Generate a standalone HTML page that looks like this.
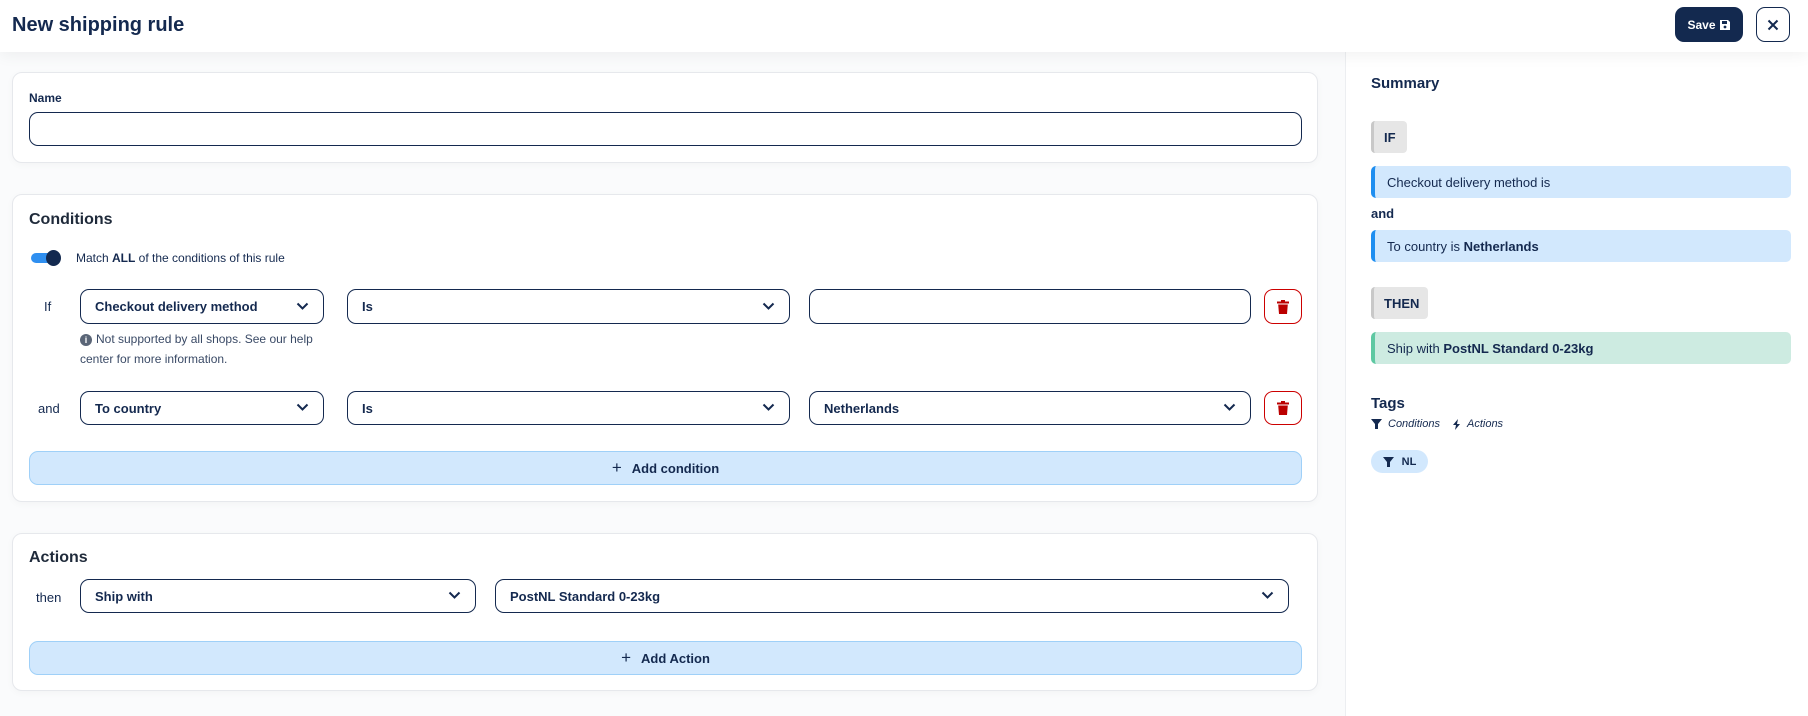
<!DOCTYPE html>
<html><head><meta charset="utf-8"><style>
*{box-sizing:border-box;margin:0;padding:0}
body{width:1808px;height:716px;overflow:hidden;background:#fafbfc;font-family:"Liberation Sans",sans-serif;color:#14294f;position:relative}
.a{position:absolute}
.hdr{left:0;top:0;width:1808px;height:52px;background:#fff;box-shadow:0 4px 14px rgba(0,0,0,0.05);z-index:2}
.card{position:absolute;background:#fff;border:1px solid #e6e8ec;border-radius:10px;box-shadow:0 2px 8px rgba(0,0,0,0.03)}
.inp{position:absolute;border:1.5px solid #14294f;border-radius:9px;background:#fff;font-size:13px;font-weight:bold;color:#14294f;padding-left:14px;display:flex;align-items:center}
.inp svg{position:absolute;right:14px;top:50%;margin-top:-5px}
.lbl{position:absolute;font-size:13px;color:#14294f}
.del{position:absolute;border:1.5px solid #c00;border-radius:9px;background:#fff;display:flex;align-items:center;justify-content:center}
.addb{position:absolute;background:#d2e8fd;border:1px solid #9fd0f8;border-radius:9px;font-size:13px;font-weight:bold;color:#14294f;display:flex;align-items:center;justify-content:center}
h3{position:absolute;font-size:16px;color:#1f2a3a}
.chip{position:absolute;background:#e6e6e6;border-left:3px solid #c8c8c8;border-radius:4px;font-size:13px;font-weight:bold;display:flex;align-items:center;padding-left:10px;color:#14294f}
.box{position:absolute;left:1371px;width:420px;height:32px;border-radius:5px;font-size:13px;display:flex;align-items:center;padding-left:12px;color:#14294f}
</style></head><body>
<div class="a hdr">
<div class="a" style="left:12px;top:14px;font-size:20px;font-weight:bold;color:#14294f">New shipping rule</div>
<div class="a" style="left:1675px;top:7px;width:68px;height:35px;background:#13294f;border-radius:9px;color:#fff;font-size:12px;font-weight:bold;display:flex;align-items:center;justify-content:center;gap:3px">Save <svg width="12" height="12" viewBox="0 0 12 12"><path d="M1 1h8l2 2v8H1z" fill="#fff"/><rect x="3" y="2" width="5" height="3" fill="#13294f"/><circle cx="6" cy="8" r="1.4" fill="#13294f"/></svg></div>
<div class="a" style="left:1756px;top:7px;width:34px;height:35px;border:1.5px solid #13294f;border-radius:9px;background:#fff;display:flex;align-items:center;justify-content:center"><svg width="12" height="12" viewBox="0 0 12 12"><path d="M1.5 1.5l9 9M10.5 1.5l-9 9" stroke="#13294f" stroke-width="2"/></svg></div>
</div>

<div class="card" style="left:12px;top:72px;width:1306px;height:91px"></div>
<div class="lbl" style="left:29px;top:91px;font-weight:bold;font-size:12px">Name</div>
<div class="inp" style="left:29px;top:112px;width:1273px;height:34px"></div>

<div class="card" style="left:12px;top:194px;width:1306px;height:308px"></div>
<h3 style="left:29px;top:211px">Conditions</h3>
<div class="a" style="left:31px;top:253px;width:24px;height:10px;background:#2f8ff0;border-radius:5px"></div>
<div class="a" style="left:46px;top:250px;width:15px;height:16px;background:#13294f;border-radius:50%"></div>
<div class="lbl" style="left:76px;top:251px;font-size:12px">Match <b>ALL</b> of the conditions of this rule</div>

<div class="lbl" style="left:44px;top:299px">If</div>
<div class="inp" style="left:80px;top:289px;width:244px;height:35px">Checkout delivery method<svg width="13" height="9" viewBox="0 0 13 9"><path d="M1.5 1.5l5 5 5-5" stroke="#14294f" stroke-width="2" fill="none"/></svg></div>
<div class="inp" style="left:347px;top:289px;width:443px;height:35px">Is<svg width="13" height="9" viewBox="0 0 13 9"><path d="M1.5 1.5l5 5 5-5" stroke="#14294f" stroke-width="2" fill="none"/></svg></div>
<div class="inp" style="left:809px;top:289px;width:442px;height:35px"></div>
<div class="del" style="left:1264px;top:289px;width:38px;height:35px"><svg width="12" height="14" viewBox="0 0 12 14"><rect x="0" y="1.5" width="12" height="2" fill="#b00"/><rect x="4" y="0" width="4" height="2" fill="#b00"/><path d="M1.2 4.5h9.6l-0.8 9.5H2z" fill="#b00"/></svg></div>
<div class="a" style="left:80px;top:334px;width:12px;height:12px;border-radius:50%;background:#5a6577;color:#fff;font-size:9px;font-weight:bold;text-align:center;line-height:12px">i</div>
<div class="lbl" style="left:96px;top:332px;font-size:12px;color:#3a4a66">Not supported by all shops. See our help</div>
<div class="lbl" style="left:80px;top:352px;font-size:12px;color:#3a4a66">center for more information.</div>

<div class="lbl" style="left:38px;top:401px">and</div>
<div class="inp" style="left:80px;top:391px;width:244px;height:34px">To country<svg width="13" height="9" viewBox="0 0 13 9"><path d="M1.5 1.5l5 5 5-5" stroke="#14294f" stroke-width="2" fill="none"/></svg></div>
<div class="inp" style="left:347px;top:391px;width:443px;height:34px">Is<svg width="13" height="9" viewBox="0 0 13 9"><path d="M1.5 1.5l5 5 5-5" stroke="#14294f" stroke-width="2" fill="none"/></svg></div>
<div class="inp" style="left:809px;top:391px;width:442px;height:34px">Netherlands<svg width="13" height="9" viewBox="0 0 13 9"><path d="M1.5 1.5l5 5 5-5" stroke="#14294f" stroke-width="2" fill="none"/></svg></div>
<div class="del" style="left:1264px;top:391px;width:38px;height:34px"><svg width="12" height="14" viewBox="0 0 12 14"><rect x="0" y="1.5" width="12" height="2" fill="#b00"/><rect x="4" y="0" width="4" height="2" fill="#b00"/><path d="M1.2 4.5h9.6l-0.8 9.5H2z" fill="#b00"/></svg></div>
<div class="addb" style="left:29px;top:451px;width:1273px;height:34px"><span style="font-size:17px;font-weight:normal;margin-right:10px">+</span>Add condition</div>

<div class="card" style="left:12px;top:533px;width:1306px;height:158px"></div>
<h3 style="left:29px;top:549px">Actions</h3>
<div class="lbl" style="left:36px;top:590px">then</div>
<div class="inp" style="left:80px;top:579px;width:396px;height:34px">Ship with<svg width="13" height="9" viewBox="0 0 13 9"><path d="M1.5 1.5l5 5 5-5" stroke="#14294f" stroke-width="2" fill="none"/></svg></div>
<div class="inp" style="left:495px;top:579px;width:794px;height:34px">PostNL Standard 0-23kg<svg width="13" height="9" viewBox="0 0 13 9"><path d="M1.5 1.5l5 5 5-5" stroke="#14294f" stroke-width="2" fill="none"/></svg></div>
<div class="addb" style="left:29px;top:641px;width:1273px;height:34px"><span style="font-size:17px;font-weight:normal;margin-right:10px">+</span>Add Action</div>

<div class="a" style="left:1345px;top:52px;width:1px;height:664px;background:#eceef1"></div>
<div class="a" style="left:1346px;top:52px;width:462px;height:664px;background:#fff"></div>
<div class="a" style="left:1371px;top:75px;font-size:15px;font-weight:bold;color:#14294f">Summary</div>
<div class="chip" style="left:1371px;top:121px;width:36px;height:32px">IF</div>
<div class="box" style="top:166px;background:#d2e8fd;border-left:4px solid #1e8ef0">Checkout delivery method is</div>
<div class="a" style="left:1371px;top:206px;font-size:13px;font-weight:bold;color:#14294f">and</div>
<div class="box" style="top:230px;background:#d2e8fd;border-left:4px solid #1e8ef0">To country is&nbsp;<b>Netherlands</b></div>
<div class="chip" style="left:1371px;top:287px;width:57px;height:32px">THEN</div>
<div class="box" style="top:332px;background:#cdebe1;border-left:4px solid #5ec8a2">Ship with&nbsp;<b>PostNL Standard 0-23kg</b></div>
<div class="a" style="left:1371px;top:395px;font-size:15px;font-weight:bold;color:#14294f">Tags</div>
<div class="a" style="left:1371px;top:418px;font-size:11px;font-style:italic;color:#14294f;display:flex;align-items:center"><svg width="11" height="10" viewBox="0 0 11 10"><path d="M0 0h11L7 5v5H4V5z" fill="#14294f"/></svg><span style="margin:0 12px 0 6px">Conditions</span><svg width="9" height="11" viewBox="0 0 9 11"><path d="M6 0L1 6h3l-1 5 5-6H5z" fill="#14294f"/></svg><span style="margin-left:6px">Actions</span></div>
<div class="a" style="left:1371px;top:450px;width:57px;height:23px;background:#d2e8fd;border-radius:12px;display:flex;align-items:center;justify-content:center;gap:8px;font-size:11px;font-weight:bold;color:#14294f"><svg width="11" height="10" viewBox="0 0 11 10"><path d="M0 0h11L7 5v5H4V5z" fill="#14294f"/></svg>NL</div>
</body></html>
